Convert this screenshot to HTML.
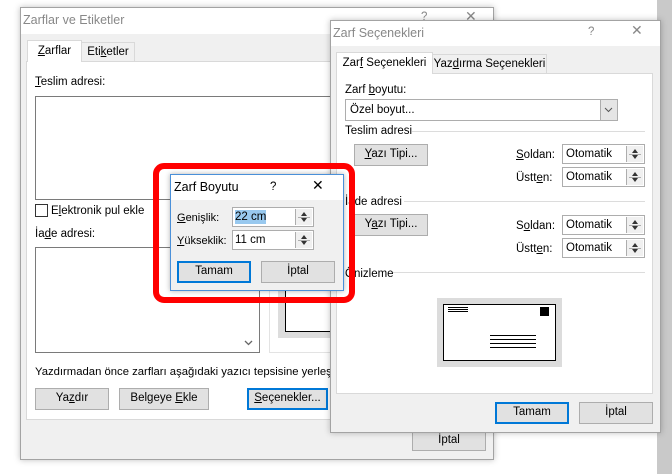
<!DOCTYPE html>
<html><head><meta charset="utf-8"><style>
*{margin:0;padding:0;box-sizing:border-box}
body{width:672px;height:474px;background:#fff;position:relative;overflow:hidden;font-family:"Liberation Sans",sans-serif;font-size:11.5px;color:#000}
div,span{position:absolute}
.t{white-space:nowrap;line-height:14px}
.win{background:#f0f0f0;border:1px solid #a3a3a3;box-shadow:0 0 6px rgba(0,0,0,.25)}
.title{background:#fff}
.gray{color:#888}
.panel{background:#fff;border:1px solid #d9d9d9}
.tab{border:1px solid #d9d9d9;border-bottom:none;background:#f0f0f0;text-align:center;line-height:20px;white-space:nowrap}
.tab.sel{background:#fff}
.box{background:#fff;border:1px solid #adadad}
.btn{background:#e1e1e1;border:1px solid #adadad;text-align:center;line-height:19px;white-space:nowrap}
.btn.def{border:2px solid #0078d7;line-height:17px}
.spin{border-left:1px solid #adadad;width:17px;top:1px;bottom:1px;right:1px;background:#f0f0f0}
.spin:before{content:"";position:absolute;left:5px;top:3px;border:3px solid transparent;border-bottom:4px solid #333;border-top:none}
.spin:after{content:"";position:absolute;left:5px;bottom:3px;border:3px solid transparent;border-top:4px solid #333;border-bottom:none}
.spin i{position:absolute;left:2px;right:2px;top:50%;height:1px;background:#adadad}
.line{height:1px;background:#dcdcdc}
u{text-decoration:underline}
</style></head><body>
<div style="left:657px;top:0;width:15px;height:474px;background:#c9c9c9"></div>

<!-- Window 1 -->
<div class="win" style="left:20px;top:7px;width:474px;height:453px">
  <div class="title" style="left:0;top:0;width:472px;height:26px"></div>
</div>
<span class="t gray" style="left:23px;top:13px;font-size:12.5px">Zarflar ve Etiketler</span>
<span class="t gray" style="left:421px;top:10px">?</span>
<span class="t gray" style="left:465px;top:9px;font-size:14px">✕</span>
<div class="panel" style="left:26px;top:61px;width:310px;height:359px"></div>
<div class="tab sel" style="left:27px;top:40px;width:55px;height:22px"><u>Z</u>arflar</div>
<div class="tab" style="left:81px;top:42px;width:54px;height:19px;line-height:18px">Eti<u>k</u>etler</div>
<span class="t" style="left:35px;top:75px"><u>T</u>eslim adresi:</span>
<div class="box" style="left:35px;top:96px;width:300px;height:104px;border-color:#7a7a7a"></div>
<div class="box" style="left:35px;top:204px;width:13px;height:13px;border-color:#333"></div>
<span class="t" style="left:51px;top:204px">E<u>l</u>ektronik pul ekle</span>
<span class="t" style="left:35px;top:227px">İa<u>d</u>e adresi:</span>
<div class="box" style="left:35px;top:247px;width:225px;height:106px;border-color:#7a7a7a"></div>
<svg style="position:absolute;left:244px;top:340px" width="9" height="6"><path d="M1 1L4.5 4.5L8 1" fill="none" stroke="#666" stroke-width="1.3"/></svg>
<div style="left:269px;top:240px;width:70px;height:113px;border:1px solid #e3e3e3;background:#fff"></div>
<div style="left:278px;top:240px;width:60px;height:98px;background:#ddd"></div>
<div style="left:285px;top:240px;width:50px;height:92px;border:1px solid #000;border-top:none;background:#fff"></div>
<span class="t" style="left:35px;top:365px;font-size:11.3px">Yazdırmadan önce zarfları aşağıdaki yazıcı tepsisine yerleştirin</span>
<div class="btn" style="left:35px;top:388px;width:74px;height:22px">Ya<u>z</u>dır</div>
<div class="btn" style="left:119px;top:388px;width:90px;height:22px">Belgeye <u>E</u>kle</div>
<div class="btn def" style="left:247px;top:388px;width:81px;height:22px"><u>S</u>eçenekler...</div>
<div class="btn" style="left:412px;top:430px;width:74px;height:21px">İptal</div>

<!-- Window 2 -->
<div class="win" style="left:330px;top:20px;width:331px;height:413px">
  <div class="title" style="left:0;top:0;width:329px;height:25px"></div>
</div>
<span class="t gray" style="left:333px;top:26px;font-size:12.5px">Zarf Seçenekleri</span>
<span class="t gray" style="left:588px;top:25px">?</span>
<span class="t gray" style="left:631px;top:23px;font-size:14px">✕</span>
<div class="panel" style="left:336px;top:73px;width:317px;height:321px"></div>
<div class="tab sel" style="left:336px;top:52px;width:97px;height:22px">Zar<u>f</u> Seçenekleri</div>
<div class="tab" style="left:432px;top:54px;width:115px;height:19px;line-height:18px">Yaz<u>d</u>ırma Seçenekleri</div>
<span class="t" style="left:345px;top:83px">Zarf <u>b</u>oyutu:</span>
<div class="box" style="left:345px;top:99px;width:273px;height:22px;border-color:#adadad"><span class="t" style="left:4px;top:3px">Özel boyut...</span></div>
<div style="left:600px;top:100px;width:17px;height:20px;background:#e5e5e5;border-left:1px solid #adadad"></div>
<svg style="position:absolute;left:604px;top:107px" width="9" height="6"><path d="M1 1L4.5 4.5L8 1" fill="none" stroke="#555" stroke-width="1"/></svg>
<span class="t" style="left:345px;top:124px">Teslim adresi</span>
<div class="line" style="left:412px;top:131px;width:233px"></div>
<div class="btn" style="left:354px;top:144px;width:74px;height:22px"><u>Y</u>azı Tipi...</div>
<span class="t" style="left:516px;top:148px"><u>S</u>oldan:</span>
<div class="box" style="left:562px;top:144px;width:83px;height:20px"><span class="t" style="left:3px;top:2px">Otomatik</span><div class="spin"><i></i></div></div>
<span class="t" style="left:516px;top:171px">Üstt<u>e</u>n:</span>
<div class="box" style="left:562px;top:167px;width:83px;height:20px"><span class="t" style="left:3px;top:2px">Otomatik</span><div class="spin"><i></i></div></div>
<span class="t" style="left:345px;top:195px">İade adresi</span>
<div class="line" style="left:404px;top:201px;width:241px"></div>
<div class="btn" style="left:354px;top:214px;width:74px;height:22px">Y<u>a</u>zı Tipi...</div>
<span class="t" style="left:516px;top:219px">S<u>o</u>ldan:</span>
<div class="box" style="left:562px;top:215px;width:83px;height:20px"><span class="t" style="left:3px;top:2px">Otomatik</span><div class="spin"><i></i></div></div>
<span class="t" style="left:516px;top:242px">Üstt<u>e</u>n:</span>
<div class="box" style="left:562px;top:238px;width:83px;height:20px"><span class="t" style="left:3px;top:2px">Otomatik</span><div class="spin"><i></i></div></div>
<span class="t" style="left:345px;top:267px">Önizleme</span>
<div class="line" style="left:393px;top:272px;width:252px"></div>
<div style="left:437px;top:298px;width:125px;height:69px;background:#dcdcdc"></div>
<div style="left:443px;top:304px;width:113px;height:57px;background:#fff;border:1.5px solid #000"></div>
<div style="left:448px;top:307px;width:20px;height:1px;background:#000"></div>
<div style="left:448px;top:309px;width:20px;height:1px;background:#000"></div>
<div style="left:448px;top:311px;width:20px;height:1px;background:#000"></div>
<div style="left:540px;top:307px;width:9px;height:9px;background:#000"></div>
<div style="left:490px;top:335px;width:46px;height:1px;background:#000"></div>
<div style="left:490px;top:339px;width:46px;height:1px;background:#000"></div>
<div style="left:490px;top:343px;width:46px;height:1px;background:#000"></div>
<div style="left:490px;top:347px;width:46px;height:1px;background:#000"></div>
<div class="btn def" style="left:495px;top:402px;width:74px;height:22px">Tamam</div>
<div class="btn" style="left:579px;top:402px;width:74px;height:22px">İptal</div>

<!-- Red highlight + Zarf Boyutu -->
<div style="left:153px;top:163px;width:202px;height:140px;border:6px solid #f00;border-radius:11px"></div>
<div class="win" style="left:170px;top:174px;width:174px;height:117px;border-color:#4a90d9;box-shadow:0 0 5px rgba(0,0,0,.3)">
  <div class="title" style="left:0;top:0;width:172px;height:25px"></div>
</div>
<span class="t" style="left:174px;top:180px;font-size:12.5px">Zarf Boyutu</span>
<span class="t" style="left:270px;top:180px">?</span>
<span class="t" style="left:312px;top:178px;font-size:14px">✕</span>
<span class="t" style="left:177px;top:211px;font-size:11px"><u>G</u>enişlik:</span>
<div class="box" style="left:232px;top:207px;width:82px;height:20px"><span class="t" style="left:2px;top:2px;background:#99c9ef">22 cm</span><div class="spin"><i></i></div></div>
<span class="t" style="left:177px;top:234px;font-size:11px"><u>Y</u>ükseklik:</span>
<div class="box" style="left:232px;top:230px;width:82px;height:20px"><span class="t" style="left:2px;top:2px">11 cm</span><div class="spin"><i></i></div></div>
<div class="btn def" style="left:177px;top:261px;width:74px;height:22px">Tamam</div>
<div class="btn" style="left:261px;top:261px;width:74px;height:22px">İptal</div>
</body></html>
